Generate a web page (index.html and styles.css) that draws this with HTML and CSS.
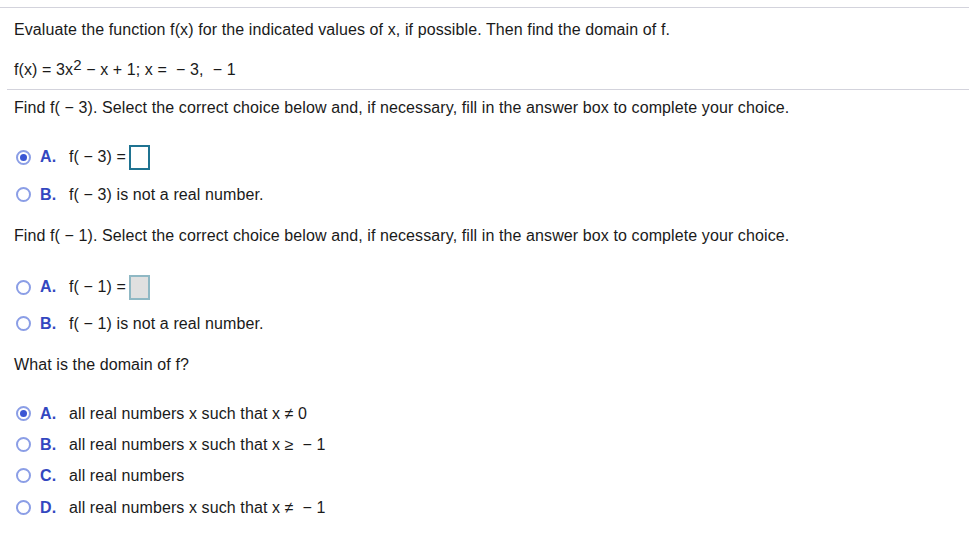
FILE: index.html
```html
<!DOCTYPE html>
<html>
<head>
<meta charset="utf-8">
<link rel="stylesheet" href="styles.css">
</head>
<body>
<div class="page">
  <div class="header">
    <p class="q intro">Evaluate the function f(x) for the indicated values of x, if possible. Then find the domain of f.</p>
    <p class="q func">f(x) = 3x<sup>2</sup> &minus; x + 1; x = &nbsp;&minus; 3, &nbsp;&minus; 1</p>
  </div>
  <div class="body">
    <p class="q find1">Find f( &minus; 3). Select the correct choice below and, if necessary, fill in the answer box to complete your choice.</p>
    <div class="choices c1">
      <div class="choice tall"><span class="radio on"></span><span class="lbl">A.</span><span class="txt">f( &minus; 3) =<span class="box"></span></span></div>
      <div class="choice gap"><span class="radio"></span><span class="lbl">B.</span><span class="txt">f( &minus; 3) is not a real number.</span></div>
    </div>
    <p class="q find2">Find f( &minus; 1). Select the correct choice below and, if necessary, fill in the answer box to complete your choice.</p>
    <div class="choices c2">
      <div class="choice tall"><span class="radio"></span><span class="lbl">A.</span><span class="txt">f( &minus; 1) =<span class="box off"></span></span></div>
      <div class="choice"><span class="radio"></span><span class="lbl">B.</span><span class="txt">f( &minus; 1) is not a real number.</span></div>
    </div>
    <p class="q find3">What is the domain of f?</p>
    <div class="choices c3">
      <div class="choice"><span class="radio on"></span><span class="lbl">A.</span><span class="txt">all real numbers x such that x &ne; 0</span></div>
      <div class="choice"><span class="radio"></span><span class="lbl">B.</span><span class="txt">all real numbers x such that x &ge; &nbsp;&minus; 1</span></div>
      <div class="choice"><span class="radio"></span><span class="lbl">C.</span><span class="txt">all real numbers</span></div>
      <div class="choice gap"><span class="radio"></span><span class="lbl">D.</span><span class="txt">all real numbers x such that x &ne; &nbsp;&minus; 1</span></div>
    </div>
  </div>
</div>
</body>
</html>
```

FILE: styles.css
```css
html, body {
  margin: 0;
  padding: 0;
  background: #ffffff;
}
body {
  font-family: "Liberation Sans", Arial, sans-serif;
  font-size: 16px;
  letter-spacing: 0.1px;
  color: #1a1a1a;
}
.page {
  padding-top: 7px;
}
.header {
  border-top: 1px solid #d3d3dc;
  padding-left: 14px;
  padding-bottom: 10px;
}
.q {
  margin: 0;
  line-height: 18px;
}
.intro {
  padding-top: 13px;
}
.func {
  padding-top: 22px;
}
.func sup {
  font-size: 15px;
  line-height: 0;
  vertical-align: 5px;
}
.body {
  margin-left: 7px;
  border-top: 1px solid #d3d3dc;
  padding-left: 7px;
}
.find1 {
  padding-top: 9px;
}
.choices {
  display: flex;
  flex-direction: column;
}
.choice {
  display: flex;
  align-items: center;
  height: 31px;
}
.choice.tall {
  height: 42px;
}
.choice.gap {
  margin-top: 1px;
}
.c1 {
  padding-top: 19px;
}
.c2 {
  padding-top: 21px;
}
.c3 {
  padding-top: 24px;
}
.find2 {
  padding-top: 17px;
}
.find3 {
  padding-top: 17px;
}
.radio {
  box-sizing: border-box;
  width: 15px;
  height: 15px;
  border: 2px solid #8b9ee6;
  border-radius: 50%;
  margin-left: 2px;
  display: flex;
  align-items: center;
  justify-content: center;
  background: #fff;
}
.radio.on::after {
  content: "";
  width: 7px;
  height: 7px;
  border-radius: 50%;
  background: #3a56d4;
}
.lbl {
  color: #3347c0;
  font-weight: bold;
  margin-left: 9px;
  width: 29px;
}
.txt {
  display: flex;
  align-items: center;
  white-space: pre;
}
.box {
  box-sizing: border-box;
  display: inline-block;
  width: 21px;
  height: 25px;
  border: 2px solid #1f7391;
  margin-left: 3px;
  background: #fff;
}
.box.off {
  border-color: #8fb8c4;
  background: #e0e0e0;
}
```
